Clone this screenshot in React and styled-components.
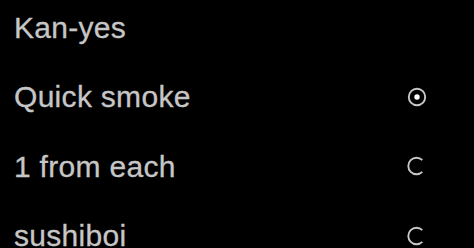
import React from 'react';
import styled, { createGlobalStyle } from 'styled-components';

const GlobalStyle = createGlobalStyle`
  html, body {
    margin: 0;
    padding: 0;
    background: #000;
    overflow: hidden;
  }
`;

const List = styled.div`
  display: flex;
  flex-direction: column;
  width: 474px;
  height: 248px;
  overflow: hidden;
  background: #000;
  font-family: 'Liberation Sans', Arial, sans-serif;
`;

const Row = styled.div`
  display: flex;
  align-items: center;
  justify-content: space-between;
  height: 69.5px;
  padding: 0 47px 0 14px;
  flex-shrink: 0;

  &:first-child {
    margin-top: -7.5px;
  }
`;

const Label = styled.span`
  color: #c6c6c6;
  font-size: 30px;
  letter-spacing: 0.3px;
  line-height: 69px;
  -webkit-text-stroke: 0.3px #c6c6c6;
`;

const RadioWrap = styled.span`
  display: flex;
  width: 20px;
  height: 20px;
`;

function Radio({ checked }) {
  return (
    <RadioWrap>
      {checked ? (
        <svg width="20" height="20" viewBox="0 0 20 20">
          <circle cx="10" cy="10" r="8.2" fill="none" stroke="#c8c8c8" strokeWidth="1.9" />
          <circle cx="10" cy="10" r="2.7" fill="#fff" />
        </svg>
      ) : (
        <svg width="20" height="20" viewBox="0 0 20 20">
          <path
            d="M15.3 4.2 A8.2 8.2 0 1 0 15.3 15.8"
            fill="none"
            stroke="#c8c8c8"
            strokeWidth="1.9"
          />
        </svg>
      )}
    </RadioWrap>
  );
}

const items = [
  { name: 'Kan-yes' },
  { name: 'Quick smoke', radio: true, checked: true },
  { name: '1 from each', radio: true },
  { name: 'sushiboi', radio: true },
];

export default function App() {
  return (
    <>
      <GlobalStyle />
      <List>
        {items.map((item) => (
          <Row key={item.name}>
            <Label>{item.name}</Label>
            {item.radio && <Radio checked={item.checked} />}
          </Row>
        ))}
      </List>
    </>
  );
}
